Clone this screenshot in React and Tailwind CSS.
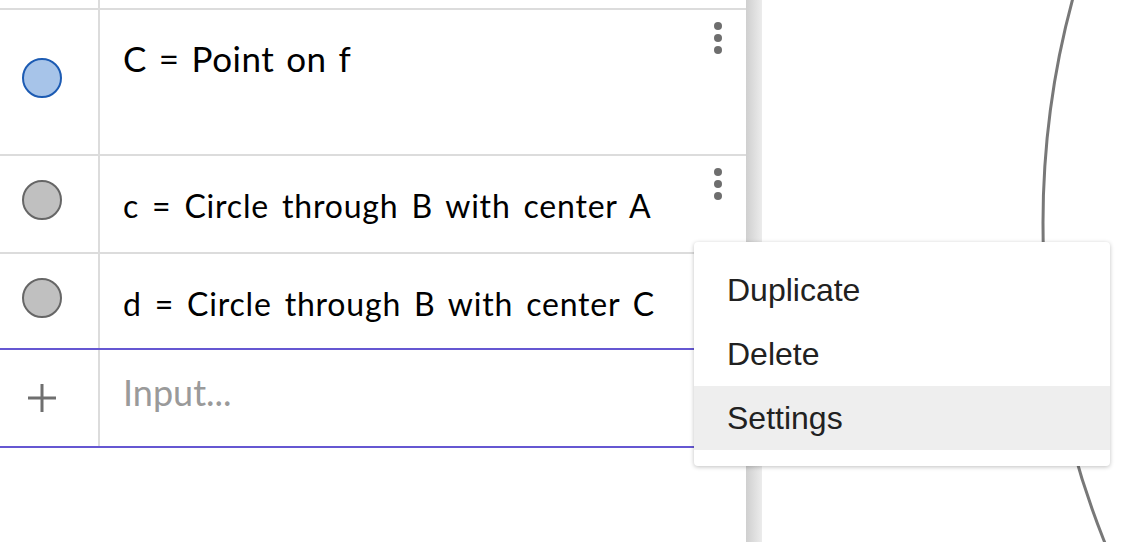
const rows = [
  { id: 'C', text: 'C = Point on f', color: 'blue', big: true },
  { id: 'c', text: 'c = Circle through B with center A', color: 'gray' },
  { id: 'd', text: 'd = Circle through B with center C', color: 'gray' },
];

function Dots() {
  return (
    <div className="flex flex-col gap-[4px] pt-[12px] pr-[24px]">
      <span className="block w-[8px] h-[8px] rounded-full bg-[#6e6e6e]" />
      <span className="block w-[8px] h-[8px] rounded-full bg-[#6e6e6e]" />
      <span className="block w-[8px] h-[8px] rounded-full bg-[#6e6e6e]" />
    </div>
  );
}

function Marble({ color }) {
  const cls =
    color === 'blue'
      ? 'bg-[#a7c4e9] border-[#1c5bb3]'
      : 'bg-[#c0c0c0] border-[#666666]';
  return <span className={`block w-[40px] h-[40px] rounded-full border-2 ${cls}`} />;
}

function AlgebraRow({ row, last }) {
  const height = row.big ? 'h-[146px]' : row.id === 'c' ? 'h-[98px]' : 'h-[96px]';
  const border = last ? 'border-[#6557d2]' : 'border-[#dcdcdc]';
  return (
    <div className={`flex ${height} border-b-2 ${border}`}>
      <div className={`w-[100px] shrink-0 border-r-2 border-[#dcdcdc] pl-[22px] ${row.big ? 'pt-[48px]' : 'pt-[24px]'}`}>
        <Marble color={row.color} />
      </div>
      <div className="flex-1 flex justify-between">
        <div
          className={`pl-[23px] leading-none text-black whitespace-pre ${
            row.big
              ? 'pt-[31px] text-[35px] tracking-[0.5px] [word-spacing:2.5px]'
              : 'pt-[34px] text-[32px] tracking-[0.8px] [word-spacing:4px]'
          }`}
          style={{ fontFamily: '"Lato", "DejaVu Sans", sans-serif' }}
        >
          {row.text}
        </div>
        <Dots />
      </div>
    </div>
  );
}

export default function App() {
  return (
    <div className="relative w-[1134px] h-[542px] overflow-hidden bg-white flex">
      {/* algebra view */}
      <div className="w-[746px] shrink-0 flex flex-col">
        <div className="flex h-[10px] border-b-2 border-[#dcdcdc]">
          <div className="w-[100px] border-r-2 border-[#dcdcdc]" />
        </div>
        {rows.map((r, i) => (
          <AlgebraRow key={r.id} row={r} last={i === rows.length - 1} />
        ))}
        <div className="flex h-[98px] border-b-2 border-[#6557d2]">
          <div className="w-[100px] shrink-0 border-r-2 border-[#dcdcdc] flex items-center pl-[28px]">
            <svg width="28" height="28" viewBox="0 0 28 28">
              <path d="M14 0V28M0 14H28" stroke="#6f6f6f" strokeWidth="3" />
            </svg>
          </div>
          <div
            className="flex-1 pl-[23px] pt-[24px] text-[36px] leading-none text-[#9a9a9a]"
            style={{ fontFamily: '"Lato", "DejaVu Sans", sans-serif' }}
          >
            Input...
          </div>
        </div>
      </div>

      {/* splitter */}
      <div className="w-[16px] shrink-0 bg-gradient-to-r from-[#cfcfcf] to-[#ececec]" />

      {/* graphics view */}
      <div className="relative flex-1 bg-white">
        <svg className="absolute inset-0" width="372" height="542">
          <circle cx="1138" cy="223" r="857" fill="none" stroke="#787878" strokeWidth="3" />
        </svg>
      </div>

      {/* context menu */}
      <div
        className="absolute left-[694px] top-[242px] w-[416px] py-[16px] bg-white rounded-[4px] shadow-[0_1px_4px_rgba(0,0,0,0.25)] text-[32px] text-[#212121]"
        style={{ fontFamily: '"Liberation Sans", Arial, sans-serif' }}
      >
        <div className="h-[64px] flex items-center pl-[33px]">Duplicate</div>
        <div className="h-[64px] flex items-center pl-[33px]">Delete</div>
        <div className="h-[64px] flex items-center pl-[33px] bg-[#eeeeee]">Settings</div>
      </div>
    </div>
  );
}
